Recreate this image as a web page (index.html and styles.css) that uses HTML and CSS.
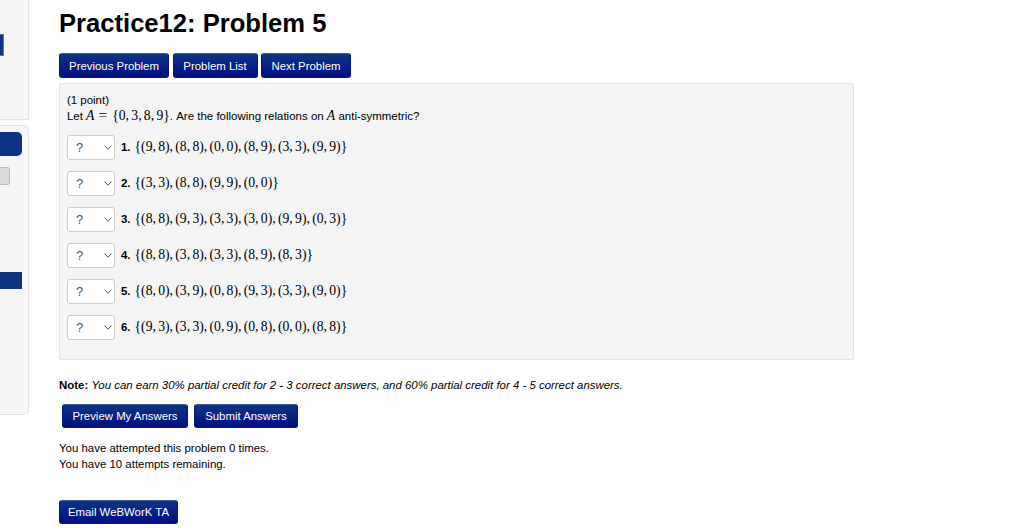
FILE: index.html
```html
<!DOCTYPE html>
<html lang="en">
<head>
    <meta charset="UTF-8">
    <meta name="viewport" content="width=device-width, initial-scale=1.0">
    <title>Practice12: Problem 5</title>
    <link rel="stylesheet" href="styles.css">
</head>
<body>

    <!-- Sidebar -->
    <div class="sidebar">
        <div class="menu">
            <div class="menu-tab"></div>
        </div>
        <div class="options">
            <div class="options-pill"></div>
            <div class="options-button"></div>
            <div class="options-bar"></div>
        </div>
    </div>

    <!-- Content -->
    <div class="content">
        <h1>Practice12: Problem 5</h1>

        <div class="nav">
            <button class="btn btn-previous">Previous Problem</button>
            <button class="btn btn-list">Problem List</button>
            <button class="btn btn-next">Next Problem</button>
        </div>

        <!-- Problem -->
        <div class="problem">
            <p>(1 point)</p>
            <p class="question">Let <span class="math"><i>A</i> <span class="rel">=</span> {0, 3, 8, 9}</span>. <span class="ask">Are the following relations on <span class="math"><i>A</i></span> anti-symmetric?</span></p>

            <div class="relation">
                <div class="answer"><select><option>?</option></select><svg viewBox="0 0 8 5"><path d="M0.5 0.6 L4 4.2 L7.5 0.6"/></svg></div>
                <b>1.</b> <span class="math">{(9, 8), (8, 8), (0, 0), (8, 9), (3, 3), (9, 9)}</span>
            </div>
            <div class="relation">
                <div class="answer"><select><option>?</option></select><svg viewBox="0 0 8 5"><path d="M0.5 0.6 L4 4.2 L7.5 0.6"/></svg></div>
                <b>2.</b> <span class="math">{(3, 3), (8, 8), (9, 9), (0, 0)}</span>
            </div>
            <div class="relation">
                <div class="answer"><select><option>?</option></select><svg viewBox="0 0 8 5"><path d="M0.5 0.6 L4 4.2 L7.5 0.6"/></svg></div>
                <b>3.</b> <span class="math">{(8, 8), (9, 3), (3, 3), (3, 0), (9, 9), (0, 3)}</span>
            </div>
            <div class="relation">
                <div class="answer"><select><option>?</option></select><svg viewBox="0 0 8 5"><path d="M0.5 0.6 L4 4.2 L7.5 0.6"/></svg></div>
                <b>4.</b> <span class="math">{(8, 8), (3, 8), (3, 3), (8, 9), (8, 3)}</span>
            </div>
            <div class="relation">
                <div class="answer"><select><option>?</option></select><svg viewBox="0 0 8 5"><path d="M0.5 0.6 L4 4.2 L7.5 0.6"/></svg></div>
                <b>5.</b> <span class="math">{(8, 0), (3, 9), (0, 8), (9, 3), (3, 3), (9, 0)}</span>
            </div>
            <div class="relation">
                <div class="answer"><select><option>?</option></select><svg viewBox="0 0 8 5"><path d="M0.5 0.6 L4 4.2 L7.5 0.6"/></svg></div>
                <b>6.</b> <span class="math">{(9, 3), (3, 3), (0, 9), (0, 8), (0, 0), (8, 8)}</span>
            </div>
        </div>

        <p class="note"><b>Note:</b> <i>You can earn 30% partial credit for 2 - 3 correct answers, and 60% partial credit for 4 - 5 correct answers.</i></p>

        <div class="submit">
            <button class="btn btn-preview">Preview My Answers</button>
            <button class="btn btn-submit">Submit Answers</button>
        </div>

        <p class="attempts">You have attempted this problem 0 times.<br>You have 10 attempts remaining.</p>

        <button class="btn btn-email">Email WeBWorK TA</button>
    </div>

</body>
</html>
```
FILE: styles.css
```css
/* General Styles */
* {
    box-sizing: border-box;
}

body {
    display: flex;
    height: 530px;
    margin: 0;
    overflow: hidden;
    background: white;
    color: black;
    font-family: "Liberation Sans", Arial, sans-serif;
    font-size: 11.45px;
    line-height: 16px;
}

h1,
p {
    margin: 0;
}

/* Sidebar */
.sidebar {
    width: 29px;
    margin-right: 30px;
}

.menu {
    height: 120px;
    padding-top: 34px;
    background: #f5f5f5;
    border: 1px solid #e3e3e3;
    border-width: 0 1px 1px 0;
}

.menu-tab {
    width: 4px;
    height: 22px;
    background: #0f3484;
    border: 1px solid #5b74aa;
    border-left: none;
}

.options {
    height: 290px;
    margin-top: 5px;
    padding-top: 6px;
    background: #f5f5f5;
    border: 1px solid #e3e3e3;
    border-left: none;
    border-radius: 0 5px 5px 0;
}

.options-pill {
    width: 22px;
    height: 24px;
    background: #0f3484;
    border-radius: 0 5px 5px 0;
}

.options-button {
    width: 10px;
    height: 18px;
    margin-top: 11px;
    background: #dddddd;
    border: 1px solid #bbbbbb;
    border-left: none;
    border-radius: 0 3px 3px 0;
}

.options-bar {
    width: 22px;
    height: 17px;
    margin-top: 87px;
    background: #0f3484;
}

/* Content */
.content {
    width: 795px;
}

h1 {
    height: 53px;
    padding-top: 7px;
    font-size: 25.6px;
    line-height: 32px;
}

/* Buttons */
.btn {
    height: 24px;
    padding: 0;
    background: linear-gradient(#0f3484, #000e84);
    color: white;
    border: 1px solid #061b78;
    border-top-color: #405b9c;
    border-radius: 3px;
    font-family: inherit;
    font-size: 11.4px;
    line-height: 16px;
    white-space: nowrap;
}

.btn-previous {
    width: 110px;
}

.btn-list {
    width: 85px;
}

.btn-next {
    width: 90px;
}

.btn-preview {
    width: 126px;
}

.btn-submit {
    width: 104px;
}

.btn-email {
    display: block;
    width: 119px;
    margin-top: 28px;
}

.nav {
    display: flex;
    gap: 3.5px;
}

.nav .btn {
    height: 25px;
}

/* Problem */
.problem {
    height: 277px;
    margin-top: 5px;
    padding: 8px 7px;
    background: #f4f4f4;
    border: 1px solid #e3e3e3;
    border-radius: 2px;
}

.question {
    height: 16px;
    margin-bottom: 11px;
    white-space: nowrap;
}

.math {
    font-family: "Liberation Serif", "Times New Roman", serif;
    font-size: 13.7px;
    line-height: 1;
    word-spacing: -0.083em;
}

.rel {
    margin: 0 2.6px 0 1.8px;
    font-size: 15.5px;
    line-height: 0;
}

.ask {
    letter-spacing: 0.02px;
}

.relation {
    display: flex;
    height: 36px;
    line-height: 25px;
    white-space: nowrap;
}

.relation b {
    width: 13.5px;
    margin-left: 6px;
}

.relation .math {
    line-height: 24px;
}

.answer {
    display: flex;
    align-items: center;
    width: 48px;
    height: 25px;
    padding-right: 2px;
    background: white;
    border: 1px solid #cccccc;
    border-radius: 3px;
}

.answer select {
    flex: 1;
    min-width: 0;
    padding: 0 0 0 8px;
    appearance: none;
    background: none;
    border: none;
    color: #555555;
    font-family: inherit;
    font-size: 13px;
}

.answer svg {
    width: 8px;
    height: 5px;
    fill: none;
    stroke: #555555;
    stroke-width: 1;
}

/* Note and attempts */
.note {
    margin-top: 17px;
    font-size: 11.43px;
    white-space: nowrap;
}

.submit {
    display: flex;
    gap: 6px;
    margin: 11px 0 12px 3px;
}
```
